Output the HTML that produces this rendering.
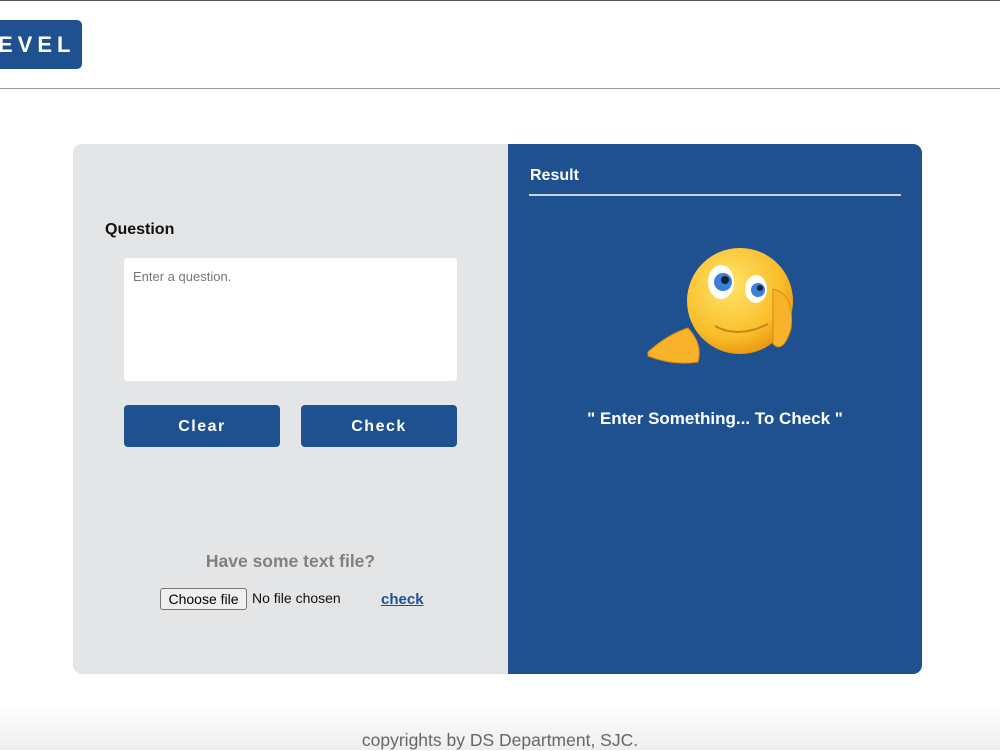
<!DOCTYPE html>
<html><head><style>
*{margin:0;padding:0;box-sizing:border-box}
body{width:1000px;height:750px;overflow:hidden;background:#fff;font-family:"Liberation Sans",sans-serif;position:relative}
.top{position:absolute;left:0;top:0;width:1000px;height:1px;background:#555}
.hdr{position:absolute;left:0;top:88px;width:1000px;height:1px;background:#999}
.logo{position:absolute;left:-10px;top:20px;width:92px;height:49px;background:#1f5190;border-radius:5px;color:#fff;font-weight:bold;font-size:22px;letter-spacing:5px;line-height:49px;padding-left:8px}
.card{position:absolute;left:73px;top:144px;width:849px;height:530px;border-radius:9px;overflow:hidden;background:#e4e5e6}
.right{position:absolute;left:435px;top:0;width:414px;height:530px;background:#1f5190}
.q{position:absolute;left:32px;top:77px;font-weight:bold;font-size:16px;color:#111}
.ta{position:absolute;left:51px;top:114px;width:333px;height:123px;background:#fff;border-radius:3px;color:#777;font-size:13px;padding:11px 9px}
.btn{position:absolute;top:261px;width:156px;height:42px;background:#1f5190;border-radius:4px;color:#fff;font-weight:bold;font-size:16px;letter-spacing:1.5px;text-align:center;line-height:44px}
.have{position:absolute;left:0;width:435px;text-align:center;top:407px;color:#808080;font-weight:bold;font-size:17.5px}
.cf{position:absolute;left:87px;top:444px;width:87px;height:22px;border:1px solid #777;border-radius:3px;background:#efefef;font-size:14px;text-align:center;line-height:20px;color:#000}
.nf{position:absolute;left:179px;top:446px;font-size:14px;color:#111}
.ck{position:absolute;left:308px;top:447px;font-size:15px;font-weight:bold;color:#1f5190;text-decoration:underline}
.res{position:absolute;left:22px;top:23px;color:#fff;font-weight:bold;font-size:16px}
.line{position:absolute;left:21px;top:50px;width:372px;height:2px;background:#c9d3e2}
.msg{position:absolute;left:0;width:414px;text-align:center;top:265px;color:#fff;font-weight:bold;font-size:17px}
.foot{position:absolute;left:0;top:705px;width:1000px;height:45px;background:linear-gradient(#fff,#eceeef)}
.ft{position:absolute;left:0;width:1000px;text-align:center;top:730px;color:#666;font-size:17.5px}
</style></head><body>
<div class="top"></div>
<div class="logo">EVEL</div>
<div class="hdr"></div>
<div class="card">
<div class="q">Question</div>
<div class="ta">Enter a question.</div>
<div class="btn" style="left:51px">Clear</div>
<div class="btn" style="left:228px">Check</div>
<div class="have">Have some text file?</div>
<div class="cf">Choose file</div>
<div class="nf">No file chosen</div>
<div class="ck">check</div>
<div class="right">
<div class="res">Result</div>
<div class="line"></div>
<svg style="position:absolute;left:125px;top:100px" width="170" height="125" viewBox="0 0 170 125">
<defs><radialGradient id="g" cx="0.4" cy="0.35" r="0.7"><stop offset="0" stop-color="#ffe46a"/><stop offset="0.7" stop-color="#f9be2a"/><stop offset="1" stop-color="#e8920f"/></radialGradient></defs>
<circle cx="107" cy="57" r="53" fill="url(#g)"/>
<ellipse cx="88" cy="38" rx="13" ry="17" fill="#fff"/><circle cx="90" cy="38" r="9" fill="#3a7fd8"/><circle cx="92" cy="36" r="4" fill="#123"/>
<ellipse cx="123" cy="45" rx="11" ry="14" fill="#fff"/><circle cx="125" cy="46" r="7" fill="#3a7fd8"/><circle cx="127" cy="44" r="3" fill="#123"/>
<path d="M82 82 Q105 95 135 80" stroke="#c7851a" stroke-width="2" fill="none"/>
<path d="M140 45 Q162 50 158 85 Q150 110 140 100 Z" fill="#f7b32a" stroke="#d88a10"/>
<path d="M15 108 Q35 90 55 84 Q70 100 65 118 Q40 122 15 112 Z" fill="#f7b32a" stroke="#d88a10"/>
</svg>
<div class="msg">" Enter Something... To Check "</div>
</div>
</div>
<div class="foot"></div>
<div class="ft">copyrights by DS Department, SJC.</div>
</body></html>
